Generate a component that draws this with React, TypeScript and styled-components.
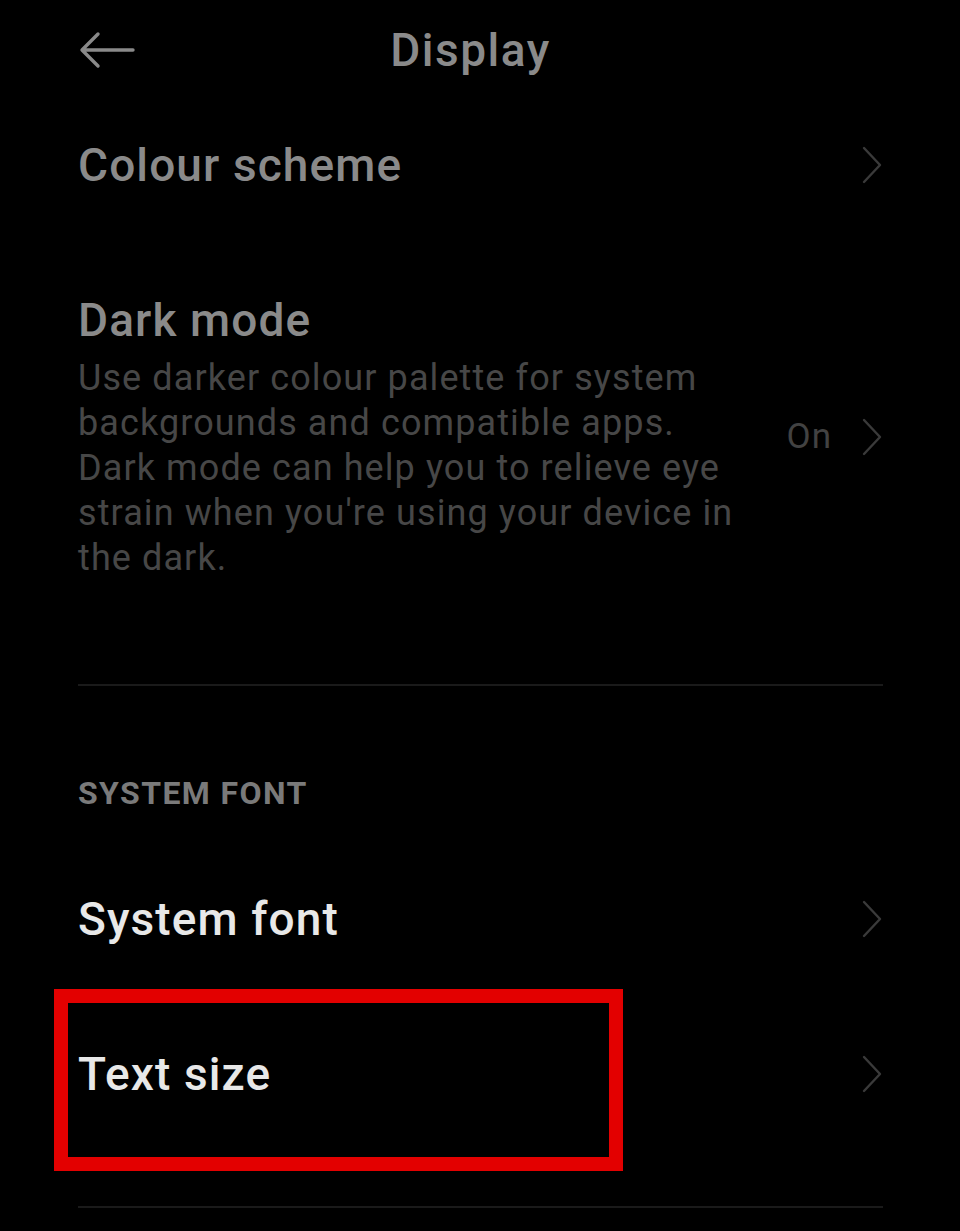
import styled, { createGlobalStyle } from 'styled-components';

const GlobalStyle = createGlobalStyle`
  html, body {
    margin: 0;
    padding: 0;
    background: #000;
  }
  body {
    font-family: Roboto, "Noto Sans", "Liberation Sans", sans-serif;
    -webkit-font-smoothing: antialiased;
  }
`;

function Chevron() {
  return (
    <ChevronSvg viewBox="0 0 20 38" width="20" height="38">
      <polyline points="2,2 18,19 2,36" fill="none" stroke="#3a3a3a" strokeWidth="2.4" strokeLinecap="round" strokeLinejoin="round" />
    </ChevronSvg>
  );
}

function BackArrow() {
  return (
    <svg viewBox="0 0 56 38" width="56" height="38">
      <path d="M54 19 H4 M19 3 L3 19 L19 35" fill="none" stroke="#8a8a8a" strokeWidth="3.4" strokeLinecap="round" strokeLinejoin="round" />
    </svg>
  );
}

export default function App() {
  return (
    <>
      <GlobalStyle />
      <Screen>
        <Header>
          <BackButton aria-label="Back">
            <BackArrow />
          </BackButton>
          <Title>Display</Title>
          <span />
        </Header>

        <Row $height={130}>
          <RowTitle $dim>Colour scheme</RowTitle>
          <Chevron />
        </Row>

        <DetailRow>
          <RowText>
            <RowTitle $dim>Dark mode</RowTitle>
            <Description>
              Use darker colour palette for system
              <br />
              backgrounds and compatible apps.
              <br />
              Dark mode can help you to relieve eye
              <br />
              strain when you're using your device in
              <br />
              the dark.
            </Description>
          </RowText>
          <Trailing>
            <Value>On</Value>
            <Chevron />
          </Trailing>
        </DetailRow>

        <Divider />

        <SectionLabel>SYSTEM FONT</SectionLabel>

        <Row $height={155}>
          <RowTitle>System font</RowTitle>
          <Chevron />
        </Row>

        <Row $height={155}>
          <RowTitle>Text size</RowTitle>
          <Chevron />
          <Highlight />
        </Row>

        <BottomSpace />
        <Divider />
      </Screen>
    </>
  );
}

const Screen = styled.div`
  width: 960px;
  min-height: 1231px;
  background: #000;
  padding: 0 77px 0 78px;
  box-sizing: border-box;
  display: flex;
  flex-direction: column;
`;

const Header = styled.header`
  height: 100px;
  display: grid;
  grid-template-columns: 1fr auto 1fr;
  align-items: center;
  padding-right: 20px;
`;

const BackButton = styled.button`
  justify-self: start;
  background: none;
  border: 0;
  padding: 0;
  margin: 0 0 0 1px;
  display: flex;
  align-items: center;
  cursor: pointer;
`;

const Title = styled.h1`
  margin: 0;
  font-size: 46px;
  font-weight: 500;
  letter-spacing: 1.5px;
  color: #8a8a8a;
  line-height: 56px;
`;

const Row = styled.div<{ $height: number }>`
  position: relative;
  height: ${(p) => p.$height}px;
  display: flex;
  align-items: center;
  justify-content: space-between;
`;

const DetailRow = styled.div`
  display: flex;
  align-items: center;
  justify-content: space-between;
  padding: 62px 0 103px;
`;

const RowText = styled.div`
  display: flex;
  flex-direction: column;
  gap: 8px;
`;

const RowTitle = styled.div<{ $dim?: boolean }>`
  font-size: 46px;
  font-weight: 500;
  letter-spacing: 1.1px;
  line-height: 56px;
  white-space: nowrap;
  color: ${(p) => (p.$dim ? '#8a8a8a' : '#e8e8e8')};
`;

const Description = styled.p`
  margin: 0;
  font-size: 36px;
  letter-spacing: 1.1px;
  line-height: 45px;
  white-space: nowrap;
  color: #474747;
`;

const Trailing = styled.div`
  display: flex;
  align-items: center;
  gap: 30px;
`;

const Value = styled.span`
  font-size: 35px;
  letter-spacing: 1px;
  color: #424242;
`;

const ChevronSvg = styled.svg`
  flex-shrink: 0;
  margin-right: 1px;
`;

const Divider = styled.hr`
  margin: 0;
  border: 0;
  height: 2px;
  background: #1a1a1a;
`;

const SectionLabel = styled.div`
  padding: 87px 0 28px;
  font-size: 32px;
  line-height: 40px;
  font-weight: 700;
  letter-spacing: 1.4px;
  color: #7a7a7a;
`;

const Highlight = styled.div`
  position: absolute;
  left: -24px;
  top: -7px;
  width: 569px;
  height: 182px;
  border: 14px solid #e30000;
  box-sizing: border-box;
  pointer-events: none;
`;

const BottomSpace = styled.div`
  height: 55px;
`;
